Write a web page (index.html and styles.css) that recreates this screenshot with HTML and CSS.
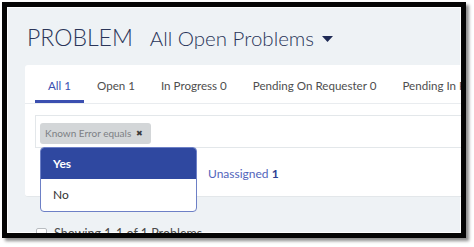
FILE: index.html
```html
<!DOCTYPE html>
<html lang="en">
<head>
<meta charset="utf-8">
<title>Problem - All Open Problems</title>
<link rel="stylesheet" href="styles.css">
</head>
<body>
<div class="frame">
  <div class="screen">
    <header class="header">
      <h1 class="title">PROBLEM</h1>
      <div class="view">
        <span class="view-name">All Open Problems</span>
        <svg class="caret" width="11" height="6" viewBox="0 0 11 6" aria-hidden="true"><path d="M0 0H11L5.5 6Z" fill="#1f2a55"/></svg>
      </div>
    </header>

    <section class="card">
      <nav class="tabs">
        <span class="tab active">All 1</span>
        <span class="tab">Open 1</span>
        <span class="tab">In Progress 0</span>
        <span class="tab">Pending On Requester 0</span>
        <span class="tab">Pending In Progress 0</span>
      </nav>
      <div class="filter">
        <span class="chip">Known Error equals <span class="chip-x">&#x2716;</span></span>
      </div>
      <div class="groups">
        <span class="group">Unassigned <b>1</b></span>
      </div>
    </section>

    <div class="footer">
      <span class="checkbox"></span>
      <span class="showing">Showing 1-1 of 1 Problems</span>
    </div>

    <ul class="menu">
      <li class="menu-item selected">Yes</li>
      <li class="menu-item">No</li>
    </ul>
  </div>
</div>
</body>
</html>
```

FILE: styles.css
```css
* { box-sizing: border-box; }

html, body {
  margin: 0;
  padding: 0;
  background: #ffffff;
}

body {
  font-family: "Lato", "Liberation Sans", sans-serif;
  width: 474px;
  height: 247px;
  overflow: hidden;
}

.frame {
  margin: 2px 0 0 2px;
  width: 464px;
  height: 236px;
  border: 5px solid #050505;
  box-shadow: 3px 3px 3px rgba(0, 0, 0, 0.45);
  background: #eef2f5;
  overflow: hidden;
}

.screen {
  position: relative;
  width: 100%;
  height: 100%;
  box-shadow: inset 0 0 0 1px #ffffff;
  overflow: hidden;
}

.header {
  display: flex;
  align-items: baseline;
  height: 58px;
  padding: 15px 0 0 20px;
  color: #2a3559;
}

.title {
  margin: 0;
  font-size: 23px;
  font-weight: 300;
  line-height: 30px;
}

.view {
  display: flex;
  align-items: center;
  margin-left: 17px;
  font-size: 20.5px;
  font-weight: 300;
  line-height: 30px;
}

.caret {
  margin-left: 8px;
  margin-top: 1px;
}

.card {
  margin-left: 18px;
  width: 620px;
  height: 132px;
  background: #ffffff;
  border-bottom: 1px solid #e3e7ea;
  border-radius: 3px 0 0 3px;
}

.tabs {
  display: flex;
  height: 39px;
  padding-left: 10px;
  border-bottom: 1px solid #e9ecef;
  white-space: nowrap;
}

.tab {
  height: 38px;
  padding: 14px 13px 0;
  line-height: 14px;
  font-size: 11.6px;
  color: #4e4e4e;
  border-bottom: 3px solid transparent;
}

.tab.active {
  color: #3b4fb0;
  border-bottom-color: #3b4fb0;
}

.filter {
  margin: 11px 0 0 10px;
  height: 33px;
  padding: 5px 4px;
  border: 1px solid #e3e7ea;
  border-right: none;
}

.chip {
  display: inline-flex;
  align-items: center;
  height: 21px;
  width: 111px;
  padding: 0 0 0 5px;
  background: #d3d6d8;
  border-radius: 3px;
  font-size: 10px;
  color: #7c8084;
  white-space: nowrap;
}

.chip-x {
  margin-left: 5px;
  font-size: 8px;
  color: #3a3a3a;
}

.groups {
  height: 48px;
  padding-left: 183px;
  line-height: 48px;
}

.group {
  font-size: 12px;
  color: #5264bb;
}

.group b {
  color: #2f3f93;
  font-weight: 700;
}

.footer {
  display: flex;
  align-items: flex-start;
  margin-top: 30px;
  padding-left: 29px;
}

.checkbox {
  width: 11px;
  height: 11px;
  border: 1px solid #b9bdc1;
  border-radius: 2px;
  background: #ffffff;
  margin-top: 1px;
}

.showing {
  margin-left: 7px;
  font-size: 12.5px;
  line-height: 14px;
  color: #4a4a4a;
}

.menu {
  position: absolute;
  left: 33px;
  top: 140px;
  width: 157px;
  margin: 0;
  padding: 0;
  list-style: none;
  background: #ffffff;
  border: 1px solid #6d80c6;
  border-radius: 4px;
  overflow: hidden;
}

.menu-item {
  height: 32px;
  padding-left: 12px;
  line-height: 32px;
  font-size: 12px;
  color: #333333;
}

.menu-item.selected {
  height: 31px;
  line-height: 31px;
  background: #2f48a0;
  color: #ffffff;
  font-weight: 700;
}
```
